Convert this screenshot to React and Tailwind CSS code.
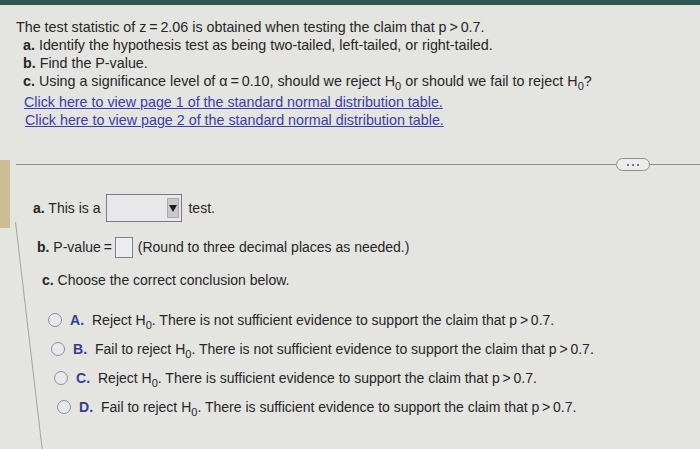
import React from "react";

const H0 = () => (
  <span>
    H<sub className="text-[11px] -bottom-[4px]">0</sub>
  </span>
);

function Radio() {
  return (
    <span className="inline-block w-[14px] h-[14px] rounded-full border-[1.5px] border-[#8a8ea0] bg-[#e9e9ec] shrink-0" />
  );
}

const options = [
  { key: "A", head: "Reject", tail: "There is not sufficient evidence to support the claim that p\u2009>\u20090.7.", ml: "ml-[48px]" },
  { key: "B", head: "Fail to reject", tail: "There is not sufficient evidence to support the claim that p\u2009>\u20090.7.", ml: "ml-[51px]" },
  { key: "C", head: "Reject", tail: "There is sufficient evidence to support the claim that p\u2009>\u20090.7.", ml: "ml-[54px]" },
  { key: "D", head: "Fail to reject", tail: "There is sufficient evidence to support the claim that p\u2009>\u20090.7.", ml: "ml-[57px]" },
];

export default function App() {
  return (
    <div className="relative w-[700px] h-[449px] overflow-hidden bg-[#e4e4e1] text-[#262626] text-[14px] leading-[18px] font-['Liberation_Sans',Arial,sans-serif]">
      <div className="h-[5px] bg-[#2d5853]" />

      {/* question text */}
      <div className="pt-[13px] text-[14.3px]">
        <div className="ml-[16px]">
          The test statistic of z{"\u2009"}={"\u2009"}2.06 is obtained when testing the claim that p{"\u2009"}&gt;{"\u2009"}0.7.
        </div>
        <div className="ml-[23px]">
          <b>a.</b> Identify the hypothesis test as being two-tailed, left-tailed, or right-tailed.
        </div>
        <div className="ml-[23px]">
          <b>b.</b> Find the P-value.
        </div>
        <div className="ml-[23px]">
          <b>c.</b> Using a significance level of α{"\u2009"}={"\u2009"}0.10, should we reject <H0 /> or should we fail to reject <H0 />?
        </div>
        <div className="mt-[3px] ml-[24px] text-[#3b3da8] underline decoration-[#3b3da8]">
          Click here to view page 1 of the standard normal distribution table.
        </div>
        <div className="ml-[25px] text-[#3b3da8] underline decoration-[#3b3da8]">
          Click here to view page 2 of the standard normal distribution table.
        </div>
      </div>

      {/* separator */}
      <div className="mt-[29px] ml-[16px] flex items-center">
        <div className="h-px flex-1 bg-[#8c8c8c]" />
        <div className="w-[34px] h-[13px] rounded-full border border-[#8f8f8f] bg-[#ececec] flex items-center justify-center gap-[3px]">
          <span className="w-[2px] h-[2px] rounded-full bg-[#4a4f70]" />
          <span className="w-[2px] h-[2px] rounded-full bg-[#4a4f70]" />
          <span className="w-[2px] h-[2px] rounded-full bg-[#4a4f70]" />
        </div>
        <div className="h-px w-[50px] bg-[#8c8c8c]" />
      </div>

      {/* left edge of answer panel */}
      <div className="absolute left-0 top-[160px] w-[10px] h-[68px] bg-[#cdbd95]" />
      <div className="absolute left-[15px] top-[222px] w-px h-[240px] bg-[#a2a29e] -rotate-[6.7deg] origin-top" />

      {/* answers */}
      <div className="mt-[22px]">
        <div className="ml-[33px] flex items-center gap-[6px] h-[30px]">
          <span><b>a.</b> This is a</span>
          <div className="w-[76px] h-[28px] border-[1.5px] border-[#77798c] bg-[#e8e8ea] flex items-center justify-end pr-[2px]">
            <div className="w-[12px] h-[20px] bg-[#c9c9cb] border border-[#a8a8ac] flex items-center justify-center">
              <svg width="8" height="8" viewBox="0 0 8 8">
                <path d="M0 1h8L4 8z" fill="#1c1c1c" />
              </svg>
            </div>
          </div>
          <span>test.</span>
        </div>

        <div className="mt-[13px] ml-[37px] flex items-center gap-[3px] h-[22px]">
          <span><b>b.</b> P-value{"\u2009"}=</span>
          <div className="w-[18px] h-[21px] border border-[#7d7f8e] bg-[#ececee]" />
          <span className="ml-[2px]">(Round to three decimal places as needed.)</span>
        </div>

        <div className="mt-[13px] ml-[42px]">
          <b>c.</b> Choose the correct conclusion below.
        </div>

        <div className="mt-[21px] flex flex-col gap-[10px]">
          {options.map((o) => (
            <div key={o.key} className={`${o.ml} flex items-center h-[19px]`}>
              <Radio />
              <b className="ml-[8px] w-[22px] text-[#2f3f8f]">{o.key}.</b>
              <span>
                {o.head} <H0 />. {o.tail}
              </span>
            </div>
          ))}
        </div>
      </div>
    </div>
  );
}
